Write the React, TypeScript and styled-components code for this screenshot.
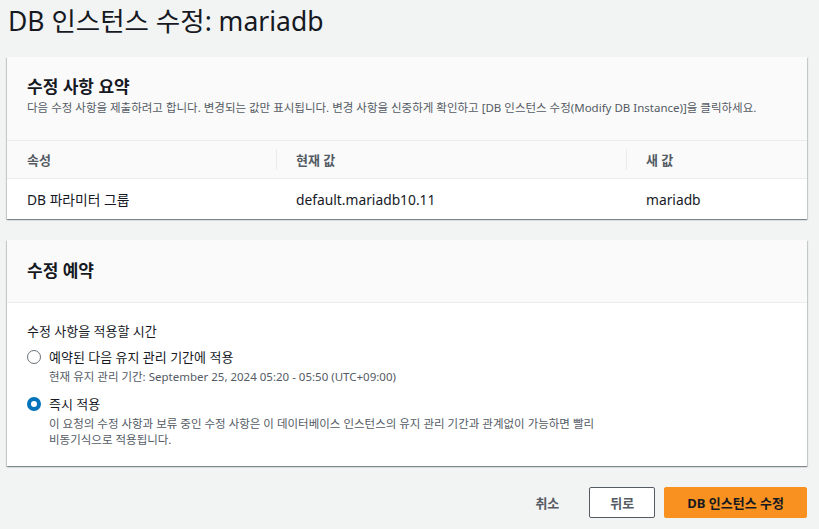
import React from 'react';
import styled, { createGlobalStyle } from 'styled-components';

const GlobalStyle = createGlobalStyle`
  html, body {
    margin: 0;
    padding: 0;
    background: #f2f3f3;
  }
  body {
    font-family: "Noto Sans", "Noto Sans CJK KR", sans-serif;
    color: #16191f;
  }
`;

const Page = styled.div`
  padding: 0 12px 0 7px;
`;

const Title = styled.h1`
  margin: 0;
  padding: 3px 0 0 1px;
  height: 57px;
  box-sizing: border-box;
  font-size: 26.5px;
  font-weight: 400;
  line-height: 36px;
  color: #16191f;
`;

const Card = styled.section`
  background: #fff;
  box-shadow: 0 1px 1px 0 rgba(0, 28, 36, 0.3), 1px 1px 1px 0 rgba(0, 28, 36, 0.15),
    -1px 1px 1px 0 rgba(0, 28, 36, 0.15);
  margin-bottom: 21px;
`;

const CardHeader = styled.div<{ $tall?: boolean }>`
  background: #fafafa;
  border-bottom: 1px solid #eaeded;
  padding: ${(p) => (p.$tall ? '19px 20px 24px' : '20px 20px 20px')};
`;

const CardTitle = styled.h2`
  margin: 0;
  font-size: 17px;
  font-weight: 700;
  line-height: 22px;
`;

const CardDesc = styled.p`
  margin: 2px 0 0;
  font-size: 11.5px;
  line-height: 16px;
  color: #545b64;
`;

const Table = styled.div`
  display: grid;
  grid-template-columns: 269px 350px 1fr;
`;

const HeadCell = styled.div<{ $divider?: boolean }>`
  position: relative;
  background: #fafafa;
  height: 37px;
  border-bottom: 1px solid #eaeded;
  display: flex;
  align-items: center;
  padding-left: 20px;
  font-size: 13px;
  font-weight: 700;
  color: #545b64;

  &::before {
    content: '';
    display: ${(p) => (p.$divider ? 'block' : 'none')};
    position: absolute;
    left: 0;
    top: 8px;
    bottom: 8px;
    width: 1px;
    background: #eaeded;
  }
`;

const Cell = styled.div`
  height: 40px;
  display: flex;
  align-items: center;
  padding-left: 20px;
  font-size: 13.8px;
  color: #16191f;
`;

const CardBody = styled.div`
  padding: 19px 20px 18px;
`;

const Label = styled.div`
  font-size: 13px;
  line-height: 18px;
  margin-bottom: 8px;
`;

const Option = styled.label`
  display: grid;
  grid-template-columns: 22px 1fr;
  margin-bottom: 10px;

  &:last-child {
    margin-bottom: 0;
  }
`;

const Radio = styled.span<{ $checked?: boolean }>`
  margin-top: 2px;
  width: 14px;
  height: 14px;
  box-sizing: border-box;
  border-radius: 50%;
  background: #fff;
  border: ${(p) => (p.$checked ? '4px solid #0073bb' : '1px solid #687078')};
`;

const OptionText = styled.div`
  font-size: 13px;
  line-height: 18px;
`;

const OptionDesc = styled.div`
  margin-top: 3px;
  font-size: 11.5px;
  line-height: 16px;
  color: #545b64;
  max-width: 560px;
  word-break: keep-all;
`;

const Actions = styled.div`
  display: flex;
  justify-content: flex-end;
  align-items: center;
  gap: 9px;
`;

const Button = styled.button<{ $variant: 'link' | 'normal' | 'primary' }>`
  font-family: inherit;
  font-size: 13px;
  font-weight: 700;
  height: 31px;
  border-radius: 2px;
  cursor: pointer;
  padding: 0 ${(p) => (p.$variant === 'primary' ? '22px' : '20px')};
  color: ${(p) => (p.$variant === 'primary' ? '#16191f' : '#545b64')};
  background: ${(p) =>
    p.$variant === 'primary' ? '#f8911f' : p.$variant === 'normal' ? '#fff' : 'transparent'};
  border: ${(p) =>
    p.$variant === 'normal'
      ? '1px solid #545b64'
      : p.$variant === 'primary'
      ? '1px solid #f8911f'
      : '1px solid transparent'};
  min-width: ${(p) => (p.$variant === 'normal' ? '66px' : 'auto')};
`;

const rows = [{ name: 'DB 파라미터 그룹', current: 'default.mariadb10.11', next: 'mariadb' }];

export default function App() {
  return (
    <>
      <GlobalStyle />
      <Page>
        <Title>DB 인스턴스 수정: mariadb</Title>

        <Card>
          <CardHeader $tall>
            <CardTitle>수정 사항 요약</CardTitle>
            <CardDesc>
              다음 수정 사항을 제출하려고 합니다. 변경되는 값만 표시됩니다. 변경 사항을 신중하게 확인하고 [DB
              인스턴스 수정(Modify DB Instance)]을 클릭하세요.
            </CardDesc>
          </CardHeader>
          <Table>
            <HeadCell>속성</HeadCell>
            <HeadCell $divider>현재 값</HeadCell>
            <HeadCell $divider>새 값</HeadCell>
            {rows.map((r) => (
              <React.Fragment key={r.name}>
                <Cell>{r.name}</Cell>
                <Cell>{r.current}</Cell>
                <Cell>{r.next}</Cell>
              </React.Fragment>
            ))}
          </Table>
        </Card>

        <Card>
          <CardHeader>
            <CardTitle>수정 예약</CardTitle>
          </CardHeader>
          <CardBody>
            <Label>수정 사항을 적용할 시간</Label>
            <Option>
              <Radio />
              <div>
                <OptionText>예약된 다음 유지 관리 기간에 적용</OptionText>
                <OptionDesc>현재 유지 관리 기간: September 25, 2024 05:20 - 05:50 (UTC+09:00)</OptionDesc>
              </div>
            </Option>
            <Option>
              <Radio $checked />
              <div>
                <OptionText>즉시 적용</OptionText>
                <OptionDesc>
                  이 요청의 수정 사항과 보류 중인 수정 사항은 이 데이터베이스 인스턴스의 유지 관리 기간과 관계없이
                  가능하면 빨리 비동기식으로 적용됩니다.
                </OptionDesc>
              </div>
            </Option>
          </CardBody>
        </Card>

        <Actions>
          <Button $variant="link">취소</Button>
          <Button $variant="normal">뒤로</Button>
          <Button $variant="primary">DB 인스턴스 수정</Button>
        </Actions>
      </Page>
    </>
  );
}
